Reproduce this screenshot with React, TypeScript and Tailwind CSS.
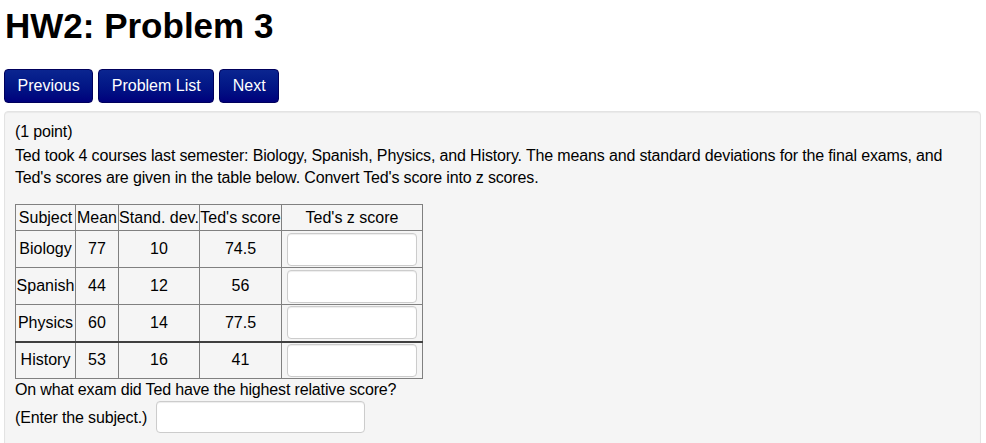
import React from "react";

const rows = [
  { s: "Biology", m: "77", d: "10", t: "74.5" },
  { s: "Spanish", m: "44", d: "12", t: "56" },
  { s: "Physics", m: "60", d: "14", t: "77.5" },
  { s: "History", m: "53", d: "16", t: "41" },
];

function Btn({ label }: { label: string }) {
  return (
    <button className="h-[34px] rounded-[4px] border border-[#00005c] bg-gradient-to-b from-[#0b2590] to-[#00007c] px-[12.5px] text-[16px] leading-[20px] text-white">
      {label}
    </button>
  );
}

export default function App() {
  return (
    <div
      className="min-h-[443px] bg-white px-[4px] text-black"
      style={{ fontFamily: '"Liberation Sans", Arial, sans-serif' }}
    >
      <h1 className="pl-[1px] pt-[6px] text-[35px] font-bold leading-[40px]">HW2: Problem 3</h1>
      <div className="mt-[23px] flex gap-[5px]">
        <Btn label="Previous" />
        <Btn label="Problem List" />
        <Btn label="Next" />
      </div>
      <div className="mt-[8px] h-[360px] w-[977px] rounded-[4px] border border-[#e3e3e3] bg-[#f5f5f5] pl-[10px] pt-[9px] text-[16px] shadow-[inset_0_1px_1px_rgba(0,0,0,0.05)]">
        <div className="leading-[21px] tracking-[-0.15px]">(1 point)</div>
        <div className="mt-[3px] leading-[21.5px] tracking-[-0.15px]">
          Ted took 4 courses last semester: Biology, Spanish, Physics, and History. The means and standard deviations for the final exams, and
          <br />
          Ted's scores are given in the table below. Convert Ted's score into z scores.
        </div>
        <table className="mt-[16px] table-fixed border-collapse text-center leading-[20px]">
          <colgroup>
            <col className="w-[60px]" />
            <col className="w-[43px]" />
            <col className="w-[81px]" />
            <col className="w-[82px]" />
            <col className="w-[141px]" />
          </colgroup>
          <thead>
            <tr className="h-[26px]">
              <th className="border border-[#808080] p-0 font-normal">Subject</th>
              <th className="border border-[#808080] p-0 font-normal">Mean</th>
              <th className="border border-[#808080] p-0 font-normal whitespace-nowrap">Stand. dev.</th>
              <th className="border border-[#808080] p-0 font-normal whitespace-nowrap">Ted's score</th>
              <th className="border border-[#808080] p-0 font-normal">Ted's z score</th>
            </tr>
          </thead>
          <tbody>
            {rows.map((r, i) => {
              const top = i === 3 ? "border-t-2 border-t-[#404040]" : "";
              return (
                <tr key={r.s} className="h-[37px]">
                  <td className={`border border-[#808080] p-0 ${top}`}>{r.s}</td>
                  <td className={`border border-[#808080] p-0 ${top}`}>{r.m}</td>
                  <td className={`border border-[#808080] p-0 ${top}`}>{r.d}</td>
                  <td className={`border border-[#808080] p-0 ${top}`}>{r.t}</td>
                  <td className={`border border-[#808080] px-[5px] py-[1px] ${top}`}>
                    <input className="block h-[33px] w-[130px] rounded-[4px] border border-[#cccccc] bg-white shadow-[inset_0_1px_1px_rgba(0,0,0,0.075)]" />
                  </td>
                </tr>
              );
            })}
          </tbody>
        </table>
        <div className="leading-[21px] tracking-[-0.15px]">On what exam did Ted have the highest relative score?</div>
        <div className="mt-[1px] flex items-center leading-[21px] tracking-[-0.15px]">
          <span>(Enter the subject.)</span>
          <input className="ml-[9px] block h-[32px] w-[209px] rounded-[4px] border border-[#cccccc] bg-white shadow-[inset_0_1px_1px_rgba(0,0,0,0.075)]" />
        </div>
      </div>
    </div>
  );
}
